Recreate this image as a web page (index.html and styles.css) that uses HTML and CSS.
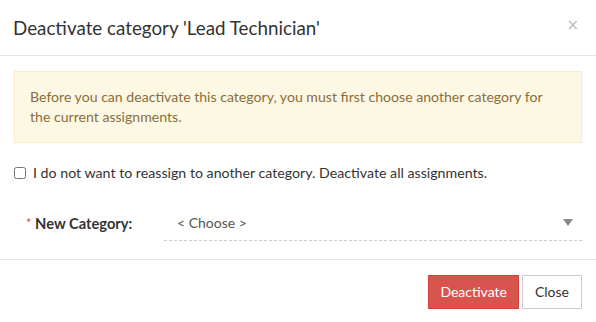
FILE: index.html
```html
<!DOCTYPE html>
<html lang="en">
<head>
  <meta charset="UTF-8">
  <meta name="viewport" content="width=device-width, initial-scale=1.0">
  <title>Deactivate category</title>
  <link rel="stylesheet" href="styles.css">
</head>
<body>
  <div class="modal">
    <div class="modal-header">
      <h4 class="modal-title">Deactivate category 'Lead Technician'</h4>
      <button class="close" type="button">&times;</button>
    </div>
    <div class="modal-body">
      <div class="alert">
        Before you can deactivate this category, you must first choose another category for the current assignments.
      </div>
      <label class="check-row">
        <input type="checkbox">
        <span>I do not want to reassign to another category. Deactivate all assignments.</span>
      </label>
      <div class="form-row">
        <div class="form-label"><span class="req">*</span> New Category:</div>
        <div class="select">
          <span class="select-text">&lt; Choose &gt;</span>
          <span class="caret"></span>
        </div>
      </div>
    </div>
    <div class="modal-footer">
      <button class="btn btn-danger" type="button">Deactivate</button>
      <button class="btn btn-default" type="button">Close</button>
    </div>
  </div>
</body>
</html>
```

FILE: styles.css
```css
body {
  margin: 0;
  font-family: Lato, 'Open Sans', sans-serif;
  font-size: 14px;
  line-height: 20px;
  color: #333;
  background-color: #fff;
}
.modal {
  width: 596px;
}
.modal-header {
  display: flex;
  align-items: center;
  justify-content: space-between;
  padding: 15px 17px 15px 13px;
  border-bottom: 1px solid #e5e5e5;
}
.modal-title {
  margin: 0;
  font-size: 18.8px;
  font-weight: normal;
  line-height: 25px;
  color: #333;
}
.close {
  padding: 0;
  margin-top: -5px;
  border: none;
  background: none;
  font-family: 'DejaVu Sans', sans-serif;
  font-size: 15px;
  color: #bbb;
  cursor: pointer;
}
.modal-body {
  padding: 15px 14px 18px;
}
.alert {
  padding: 15px 22px 15px 15px;
  margin-bottom: 20px;
  border: 1px solid #faebcc;
  background-color: #fcf8e3;
  color: #8a6d3b;
  font-size: 14.1px;
}
.check-row {
  display: flex;
  align-items: center;
  gap: 7px;
  font-size: 14.2px;
}
.check-row input {
  width: 12px;
  height: 12px;
  margin: 0;
}
.form-row {
  display: flex;
  align-items: center;
  margin-top: 22px;
}
.form-label {
  width: 150px;
  padding-left: 12px;
  box-sizing: border-box;
  font-weight: bold;
  font-size: 14.7px;
  color: #333;
}
.req {
  color: #d9534f;
  font-weight: normal;
  font-size: 13px;
  vertical-align: top;
}
.select {
  flex: 1;
  display: flex;
  align-items: center;
  justify-content: space-between;
  height: 35px;
  padding: 0 9px 0 13px;
  border-bottom: 1px dashed #ccc;
  color: #555;
}
.caret {
  width: 0;
  height: 0;
  border-left: 5px solid transparent;
  border-right: 5px solid transparent;
  border-top: 7px solid #888;
}
.modal-footer {
  display: flex;
  justify-content: flex-end;
  gap: 3px;
  padding: 15px 14px;
  border-top: 1px solid #e5e5e5;
}
.btn {
  padding: 6px 12px;
  font-family: inherit;
  font-size: 14px;
  line-height: 20px;
  border: 1px solid transparent;
  cursor: pointer;
}
.btn-danger {
  padding: 6px 11px;
  background-color: #d9534f;
  border-color: #d43f3a;
  color: #fff;
}
.btn-default {
  background-color: #fff;
  border-color: #ccc;
  color: #333;
}
```
